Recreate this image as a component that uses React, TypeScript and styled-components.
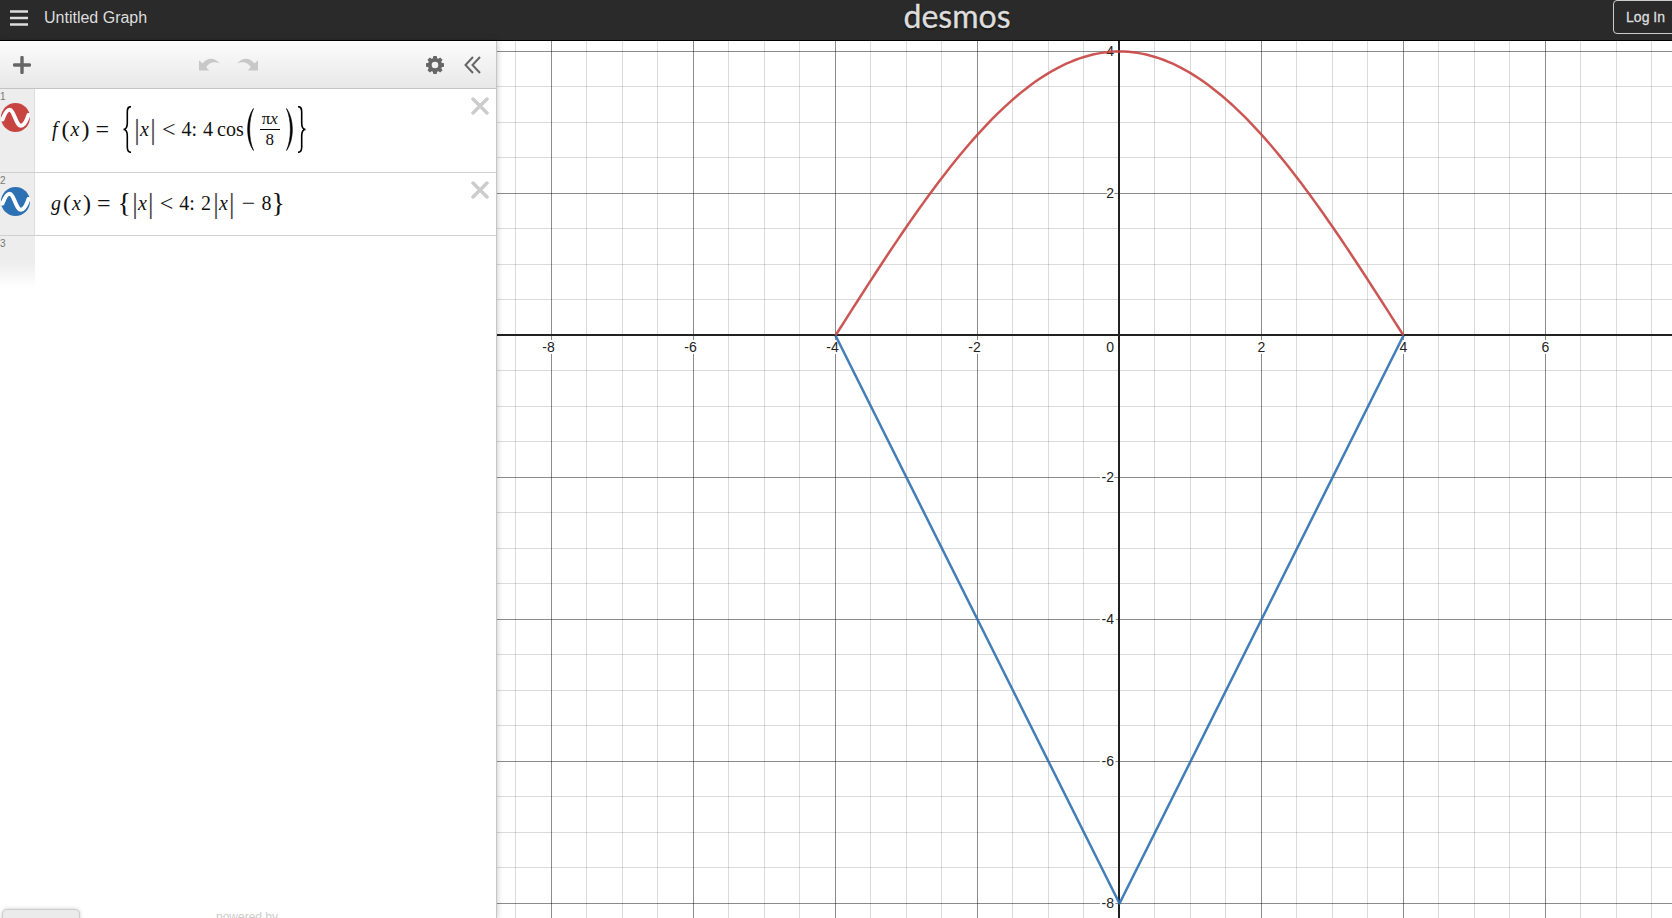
import React, { useEffect, useRef, useState } from "react";
import styled, { createGlobalStyle } from "styled-components";

const GlobalStyle = createGlobalStyle`
  * { box-sizing: border-box; }
  body { margin: 0; background: #fff; font-family: "Liberation Sans", Arial, sans-serif; }
  button { font: inherit; padding: 0; border: 0; background: none; cursor: pointer; }
  svg { display: block; }
`;

const Page = styled.div`
  display: flex;
  flex-direction: column;
  height: 100vh;
  overflow: hidden;
`;

const Header = styled.header`
  display: grid;
  grid-template-columns: 1fr auto 1fr;
  flex: none;
  height: 41px;
  background: #2a2a2a;
  border-bottom: 1px solid #000;
  color: #ddd;
`;

const HeaderLeft = styled.div`
  display: flex;
  align-items: center;
  gap: 15px;
  height: 35px;
  padding-left: 9px;
`;

const Title = styled.h1`
  margin: 0;
  font-size: 16px;
  line-height: 20px;
  font-weight: 400;
`;

const Logo = styled.a`
  height: 34px;
  padding-left: 242px;
  color: #ddd;
  font-family: Lato, sans-serif;
  font-size: 32px;
  line-height: 32px;
  text-decoration: none;
  text-shadow: 0 1px 2px #000;
  -webkit-text-stroke: 0.4px #ddd;
`;

const HeaderRight = styled.div`
  display: flex;
  justify-content: flex-end;
  align-items: flex-start;
  overflow: hidden;
`;

const LoginButton = styled.button`
  height: 34px;
  margin-right: -8px;
  padding: 0 14px 0 12px;
  border: 1px solid #ccc;
  border-radius: 4px;
  color: #ddd;
  font-size: 14px;
  -webkit-text-stroke: 0.3px #ddd;
`;

const Main = styled.main`
  display: flex;
  flex: 1;
  min-height: 0;
`;

const Sidebar = styled.section`
  position: relative;
  display: flex;
  flex-direction: column;
  flex: none;
  width: 497px;
  background: #fff;
  border-right: 1px solid #c6c6c6;
  box-shadow: 0 0 6px rgba(0, 0, 0, 0.25);
`;

const Toolbar = styled.div`
  display: flex;
  justify-content: space-between;
  align-items: center;
  flex: none;
  height: 48px;
  padding: 0 15px 0 13px;
  background: linear-gradient(#fcfcfc, #e8e8e8);
  border-bottom: 1px solid #c4c4c4;
`;

const ToolGroup = styled.div<{ $gap: number }>`
  display: flex;
  align-items: center;
  gap: ${(p) => p.$gap}px;
`;

const IconButton = styled.button<{ $color?: string }>`
  display: flex;
  color: ${(p) => p.$color ?? "#666"};
`;

const Expressions = styled.ol`
  flex: 1;
  min-height: 0;
  margin: 0;
  padding: 0;
  list-style: none;
`;

const Row = styled.li<{ $height: number }>`
  display: flex;
  min-height: ${(p) => p.$height}px;
  border-bottom: 1px solid #d0d0d0;
`;

const Gutter = styled.div`
  flex: none;
  width: 35px;
  padding-top: 2px;
  background: #ededed;
  border-right: 1px solid #ddd;
`;

const LastGutter = styled(Gutter)`
  height: 52px;
  background: linear-gradient(#ededed 50%, #fff);
  border-right: 0;
`;

const Index = styled.span`
  display: block;
  height: 12px;
  color: #777;
  font-size: 10px;
  line-height: 12px;
`;

const CurveButton = styled(IconButton)`
  margin-left: 1px;
`;

const Formula = styled.div`
  display: flex;
  align-items: center;
  flex: 1;
  padding: 0 0 3px 14px;
  color: #111;
  font-family: "Liberation Serif", "Times New Roman", serif;
  font-size: 20px;
  line-height: 24px;
  white-space: pre;
`;

const RowAction = styled.div`
  padding: 8px 7px 0 0;
`;

const Sym = styled.span<{ $l?: number; $r?: number }>`
  margin-left: ${(p) => p.$l ?? 0}px;
  margin-right: ${(p) => p.$r ?? 0}px;
`;

const Variable = styled(Sym)`
  font-style: italic;
`;

const Operator = styled(Sym)`
  font-size: 24px;
`;

const Paren = styled(Sym)`
  font-size: 24px;
`;

const Bar = styled(Sym)`
  color: #444;
  font-size: 30px;
`;

const Brace = styled(Sym)`
  font-size: 28px;
`;

const Fraction = styled.span`
  display: flex;
  flex-direction: column;
  align-items: center;
  margin: 0 6px;
  font-size: 17px;
  line-height: 20px;
`;

const Numerator = styled.span`
  padding: 0 2px;
  border-bottom: 1px solid #000;
`;

const Footer = styled.footer`
  display: flex;
  flex: none;
  height: 11px;
  padding: 0 2px;
  overflow: visible;
`;

const KeypadButton = styled.button`
  width: 78px;
  height: 40px;
  margin-top: 2px;
  background: #ebebeb;
  border: 1px solid #ccc;
  border-radius: 5px;
  box-shadow: 0 0 4px rgba(0, 0, 0, 0.2);
`;

const PoweredBy = styled.span`
  margin-left: 136px;
  padding-top: 3px;
  color: #ccc;
  font-size: 12px;
  line-height: 14px;
`;

const GraphPaper = styled.section`
  flex: 1;
  min-width: 0;
  overflow: hidden;
`;

const GraphSvg = styled.svg`
  width: 100%;
  height: 100%;
  font-size: 14px;
`;

const UNIT = 71;
const ORIGIN = { x: 622.5, y: 294.5 };

/* Centre of the device pixel that a grid line falls on. */
const snap = (v: number) => Math.ceil(v) - 0.5;
const toX = (x: number) => ORIGIN.x + x * UNIT;
const toY = (y: number) => ORIGIN.y - y * UNIT;
const pointList = (from: number, to: number, step: number, fn: (x: number) => number) => {
  const out: string[] = [];
  for (let x = from; x <= to; x += step) out.push(`${toX(x)},${toY(fn(x))}`);
  return out.join(" ");
};

/* Non-zero half-unit steps whose position lies between 0 and limit. */
const visible = (limit: number, place: (v: number) => number) =>
  Array.from({ length: 161 }, (_, i) => (i - 80) / 2).filter(
    (v) => v !== 0 && place(v) > 0 && place(v) < limit,
  );
const isMajor = (v: number) => v % 2 === 0;

function Graph() {
  const ref = useRef<HTMLElement>(null);
  const [size, setSize] = useState({ width: 0, height: 0 });

  useEffect(() => {
    const el = ref.current;
    if (!el) return;
    const measure = () => setSize({ width: el.clientWidth, height: el.clientHeight });
    measure();
    const observer = new ResizeObserver(measure);
    observer.observe(el);
    return () => observer.disconnect();
  }, []);

  const { width, height } = size;
  const xs = visible(width, toX);
  const ys = visible(height, toY);
  const lines = (major: boolean) =>
    xs.filter((v) => isMajor(v) === major).map((v) => `M${snap(toX(v))} 0V${height}`).join("") +
    ys.filter((v) => isMajor(v) === major).map((v) => `M0 ${snap(toY(v))}H${width}`).join("");
  const halo = { stroke: "#fff", strokeWidth: 4, paintOrder: "stroke", fill: "#222" } as const;

  return (
    <GraphPaper ref={ref}>
      <GraphSvg role="img" aria-label="Graph of f and g">
        <path d={lines(false)} stroke="#000" strokeOpacity="0.14" />
        <path d={lines(true)} stroke="#000" strokeOpacity="0.45" />
        <path d={`M622 0V${height}M0 294H${width}`} stroke="#222" strokeWidth="2" />
        <g {...halo} textAnchor="middle">
          {xs.filter(isMajor).map((v) => (
            <text key={v} x={toX(v) - (v < 0 ? 3 : 0)} y="311">{v}</text>
          ))}
        </g>
        <g {...halo} textAnchor="end">
          <text x="617" y="311">0</text>
          {ys.filter(isMajor).map((v) => (
            <text key={v} x="617" y={toY(v) + 4}>{v}</text>
          ))}
        </g>
        <g fill="none" strokeWidth="2.5" strokeOpacity="0.9" strokeLinejoin="round">
          <polyline stroke="#c74440" points={pointList(-4, 4, 0.0625, (x) => 4 * Math.cos((Math.PI * x) / 8))} />
          <polyline stroke="#2d70b3" points={pointList(-4, 4, 4, (x) => 2 * Math.abs(x) - 8)} />
        </g>
      </GraphSvg>
    </GraphPaper>
  );
}

const MenuIcon = () => (
  <svg width="20" height="18" viewBox="0 0 20 18">
    <path d="M1 2.5H19M1 9H19M1 15.5H19" stroke="#ddd" strokeWidth="2.6" />
  </svg>
);

const PlusIcon = () => (
  <svg width="18" height="18" viewBox="0 0 18 18">
    <path d="M9 1.5V16.5M1.5 9H16.5" stroke="currentColor" strokeWidth="3.4" strokeLinecap="round" />
  </svg>
);

const UndoIcon = ({ flip }: { flip?: boolean }) => (
  <svg width="21" height="13" viewBox="0 0 21 13">
    <path
      transform={flip ? "matrix(-1 0 0 1 21 0)" : undefined}
      d="M0 2.2V12.5H10.3L7.2 9.3C10 4.6 15 3 21 5.4C15.5 -1 8 -0.8 3.5 5.6Z"
      fill="currentColor"
    />
  </svg>
);

const GearIcon = () => (
  <svg width="18" height="18" viewBox="-9 -9 18 18">
    <circle r="5.2" fill="none" stroke="currentColor" strokeWidth="3.8" />
    {[0, 45, 90, 135, 180, 225, 270, 315].map((a) => (
      <path key={a} d="M-2.2 -6L-1.7 -9H1.7L2.2 -6Z" fill="currentColor" transform={`rotate(${a})`} />
    ))}
  </svg>
);

const CollapseIcon = () => (
  <svg width="17" height="18" viewBox="0 0 17 18">
    <path d="M9 1L1.5 9L9 17M16 1L8.500 9L16 17" fill="none" stroke="currentColor" strokeWidth="2" />
  </svg>
);

const CloseIcon = () => (
  <svg width="18" height="18" viewBox="0 0 18 18">
    <path d="M2 2L16 16M16 2L2 16" stroke="currentColor" strokeWidth="3.4" strokeLinecap="round" />
  </svg>
);

const CurveIcon = ({ color }: { color: string }) => (
  <svg width="29" height="29" viewBox="0 0 29 29">
    <circle cx="14.5" cy="14.5" r="14.5" fill={color} />
    <path
      d="M1.5 16.500C4 10 6 6.800 8.500 6.800C13 6.800 15 22.800 20 22.800C23 22.800 25.500 18 27.500 12"
      fill="none"
      stroke="#fff"
      strokeWidth="4"
      strokeLinecap="round"
    />
  </svg>
);

const TallBrace = ({ flip }: { flip?: boolean }) => (
  <svg width="8" height="47" viewBox="0 0 8 47" role="img" aria-label={flip ? "}" : "{"}>
    <path
      transform={flip ? "matrix(-1 0 0 1 8 0)" : undefined}
      d="M8 0.700C5 0.700 4.300 2.500 4.300 6V17C4.300 21 3 23.500 0.500 23.500C3 23.500 4.300 26 4.300 30V41C4.300 44.500 5 46.300 8 46.300"
      fill="none"
      stroke="#000"
      strokeWidth="1.6"
    />
  </svg>
);

const TallParen = ({ flip }: { flip?: boolean }) => (
  <svg width="7" height="43" viewBox="0 0 7 43" role="img" aria-label={flip ? ")" : "("}>
    <path
      transform={flip ? "matrix(-1 0 0 1 7 0)" : undefined}
      d="M6.5 0.500C-1.300 11 -1.300 32 6.500 42.500C1.300 31 1.300 12 6.500 0.500Z"
      stroke="#000"
      strokeWidth="0.6"
    />
  </svg>
);

const AbsX = ({ l, r }: { l: number; r: number }) => (
  <>
    <Bar $l={l}>|</Bar>
    <Variable>x</Variable>
    <Bar $l={1} $r={r}>|</Bar>
  </>
);

const Signature = ({ name }: { name: string }) => (
  <>
    <Variable $l={name === "f" ? 3 : 2}>{name}</Variable>
    <Paren $l={name === "f" ? 4 : 2}>(</Paren>
    <Variable $l={1}>x</Variable>
    <Paren $l={2}>)</Paren>
    <Operator $l={6} $r={7}>=</Operator>
  </>
);

function ExpressionRow(props: { index: number; height: number; color: string; children: React.ReactNode }) {
  return (
    <Row $height={props.height}>
      <Gutter>
        <Index>{props.index}</Index>
        <CurveButton aria-label="Toggle curve">
          <CurveIcon color={props.color} />
        </CurveButton>
      </Gutter>
      <Formula>{props.children}</Formula>
      <RowAction>
        <IconButton $color="#ccc" aria-label="Delete expression">
          <CloseIcon />
        </IconButton>
      </RowAction>
    </Row>
  );
}

export default function App() {
  return (
    <Page>
      <GlobalStyle />
      <Header>
        <HeaderLeft>
          <IconButton aria-label="Menu"><MenuIcon /></IconButton>
          <Title>Untitled Graph</Title>
        </HeaderLeft>
        <Logo href="#">desmos</Logo>
        <HeaderRight>
          <LoginButton>Log In</LoginButton>
        </HeaderRight>
      </Header>
      <Main>
        <Sidebar>
          <Toolbar>
            <IconButton aria-label="Add item"><PlusIcon /></IconButton>
            <ToolGroup $gap={17}>
              <IconButton $color="#c8c8c8" aria-label="Undo"><UndoIcon /></IconButton>
              <IconButton $color="#c8c8c8" aria-label="Redo"><UndoIcon flip /></IconButton>
            </ToolGroup>
            <ToolGroup $gap={20}>
              <IconButton aria-label="Graph settings"><GearIcon /></IconButton>
              <IconButton aria-label="Hide expression list"><CollapseIcon /></IconButton>
            </ToolGroup>
          </Toolbar>
          <Expressions>
            <ExpressionRow index={1} height={84} color="#c74440">
              <Signature name="f" />
              <Sym $l={7} />
              <TallBrace />
              <AbsX l={3} r={6} />
              <Operator $r={6}>&lt;</Operator>
              <Sym>4:</Sym>
              <Sym $l={6} $r={4}>4</Sym>
              <Sym $r={3}>cos</Sym>
              <TallParen />
              <Fraction>
                <Numerator>π<Variable>x</Variable></Numerator>
                <span>8</span>
              </Fraction>
              <TallParen flip />
              <Sym $l={5} />
              <TallBrace flip />
            </ExpressionRow>
            <ExpressionRow index={2} height={63} color="#2d70b3">
              <Signature name="g" />
              <Brace>{"{"}</Brace>
              <AbsX l={1} r={6} />
              <Operator $r={6}>&lt;</Operator>
              <Sym>4:</Sym>
              <Sym $l={6}>2</Sym>
              <AbsX l={2} r={7} />
              <Operator $r={6}>−</Operator>
              <Sym>8</Sym>
              <Brace>{"}"}</Brace>
            </ExpressionRow>
            <li>
              <LastGutter>
                <Index>3</Index>
              </LastGutter>
            </li>
          </Expressions>
          <Footer>
            <KeypadButton aria-label="Open keypad" />
            <PoweredBy>powered by</PoweredBy>
          </Footer>
        </Sidebar>
        <Graph />
      </Main>
    </Page>
  );
}
